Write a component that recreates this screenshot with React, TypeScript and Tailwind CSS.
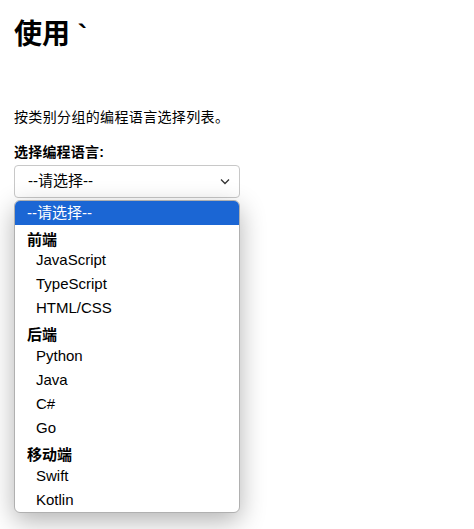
import React from "react";

const groups = [
  { label: "前端", items: ["JavaScript", "TypeScript", "HTML/CSS"], h: "h-[23px]" },
  { label: "后端", items: ["Python", "Java", "C#", "Go"], h: "h-[24px]" },
  { label: "移动端", items: ["Swift", "Kotlin"], h: "h-[24px]" },
];

export default function App() {
  const font = { fontFamily: '"Liberation Sans", Arial, "Noto Sans CJK SC", sans-serif' };
  return (
    <div className="relative w-[474px] h-[529px] bg-white text-black" style={font}>
      <div className="px-[14px] pt-[18px]">
        <h1 className="text-[28px] leading-[34px] font-bold">使用 `</h1>
        <p className="mt-[55px] text-[14px] leading-[20px] tracking-[0.35px]">按类别分组的编程语言选择列表。</p>
        <div className="mt-[15px] text-[14px] leading-[20px] font-bold tracking-[0.2px]">选择编程语言:</div>
        <div className="mt-[3px] w-[226px] h-[33px] border border-[#c8c8c8] rounded-[4px] flex items-center justify-between pl-[13px] pr-[8px] text-[15px]">
          <span>--请选择--</span>
          <svg width="10" height="7" viewBox="0 0 10 7" className="mr-[1px]">
            <polyline points="1,1.5 5,5.5 9,1.5" fill="none" stroke="#333" strokeWidth="1.3" />
          </svg>
        </div>
      </div>
      <div className="absolute left-[14px] top-[200px] w-[226px] border border-[#b0b0b0] rounded-[6px] bg-white shadow-[0_8px_26px_rgba(0,0,0,0.3)] overflow-hidden text-[15px]">
        <div className="h-[24px] bg-[#1b66d4] text-white pl-[12px] leading-[24px]">--请选择--</div>
        {groups.map((g) => (
          <div key={g.label}>
            <div className={`${g.h} pl-[12px] pt-[5px] leading-[20px] font-bold`}>{g.label}</div>
            {g.items.map((it) => (
              <div key={it} className="h-[24px] pl-[21px] leading-[24px]">{it}</div>
            ))}
          </div>
        ))}
      </div>
    </div>
  );
}
